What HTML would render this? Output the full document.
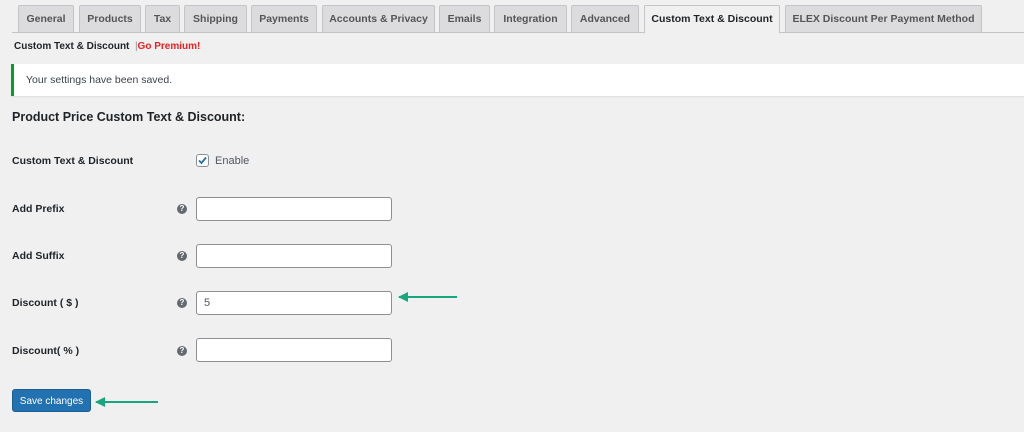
<!DOCTYPE html>
<html><head><meta charset="utf-8"><style>
*{box-sizing:border-box;margin:0;padding:0}
body{width:1024px;height:432px;background:#f0f0f1;font-family:"Liberation Sans",sans-serif;color:#23282d;position:relative;overflow:hidden;font-size:12px}
.tabline{position:absolute;left:12px;right:0;top:32px;height:1px;background:#c3c4c7}
.tab{position:absolute;top:5px;height:27px;background:#dcdcde;border:1px solid #c3c4c7;border-bottom:none;border-radius:2px 2px 0 0;font-size:10.5px;font-weight:bold;color:#555;text-align:center;line-height:26px;white-space:nowrap}
.tab.act{background:#f0f0f1;color:#1d2327;height:28px}
.abs{position:absolute;white-space:nowrap}
.notice{position:absolute;left:11px;right:0;top:64px;height:32px;background:#fff;border-left:3px solid #00a32a;box-shadow:0 1px 1px rgba(0,0,0,.08);font-size:10.5px;line-height:32px;padding-left:12px;color:#3c434a}
.lbl{position:absolute;left:12px;font-size:10.5px;font-weight:bold;color:#1d2327}
.inp{position:absolute;left:196px;width:196px;height:24px;background:#fff;border:1px solid #8c8f94;border-radius:3px;font-size:11px;padding-left:7px;line-height:22px;color:#50575e}
.help{position:absolute;left:177px;width:10px;height:10px;border-radius:50%;background:#646970;color:#fff;font-size:8px;font-weight:bold;text-align:center;line-height:10px}
</style></head><body>
<div class="tabline"></div>
<div class="tab" style="left:18px;width:56px">General</div>
<div class="tab" style="left:79px;width:62px">Products</div>
<div class="tab" style="left:145px;width:35px">Tax</div>
<div class="tab" style="left:184px;width:63px">Shipping</div>
<div class="tab" style="left:251px;width:66px">Payments</div>
<div class="tab" style="left:322px;width:113px">Accounts &amp; Privacy</div>
<div class="tab" style="left:439px;width:51px">Emails</div>
<div class="tab" style="left:494px;width:73px">Integration</div>
<div class="tab" style="left:571px;width:68px">Advanced</div>
<div class="tab act" style="left:644px;width:136px;color:#1d2327">Custom Text &amp; Discount</div>
<div class="tab" style="left:785px;width:197px">ELEX Discount Per Payment Method</div>
<div class="abs" style="left:14px;top:41px;font-size:10px;font-weight:bold;color:#1d2327">Custom Text &amp; Discount &nbsp;<span style="color:#8c8f94;font-weight:normal">|</span><span style="color:#f02020">Go Premium!</span></div>
<div class="notice">Your settings have been saved.</div>
<div class="abs" style="left:12px;top:110px;font-size:12.5px;font-weight:bold;color:#1d2327">Product Price Custom Text &amp; Discount:</div>
<div class="lbl" style="top:155px">Custom Text &amp; Discount</div>
<div class="abs" style="left:196px;top:154px;width:13px;height:13px;background:#fff;border:1px solid #8c8f94;border-radius:3px"><svg width="11" height="11" viewBox="0 0 11 11" style="position:absolute;left:0;top:0"><path d="M2 5.5 L4.5 8 L9 2.5" stroke="#2271b1" stroke-width="1.8" fill="none"/></svg></div>
<div class="abs" style="left:215px;top:155px;font-size:11px;color:#50575e">Enable</div>
<div class="lbl" style="top:203px">Add Prefix</div><div class="help" style="top:204px">?</div><div class="inp" style="top:197px"></div>
<div class="lbl" style="top:250px">Add Suffix</div><div class="help" style="top:251px">?</div><div class="inp" style="top:244px"></div>
<div class="lbl" style="top:297px">Discount ( $ )</div><div class="help" style="top:298px">?</div><div class="inp" style="top:291px">5</div>
<div class="lbl" style="top:345px">Discount( % )</div><div class="help" style="top:346px">?</div><div class="inp" style="top:338px"></div>
<div class="abs" style="left:12px;top:389px;width:79px;height:23px;background:#2271b1;border:1px solid #1b5e94;border-radius:3px;color:#fff;font-size:10px;text-align:center;line-height:23px">Save changes</div>
<svg class="abs" style="left:395px;top:290px" width="65" height="14"><path d="M4 7 H62" stroke="#17a77e" stroke-width="2"/><path d="M3 7 L13 2 L13 12 Z" fill="#17a77e"/></svg>
<svg class="abs" style="left:92px;top:395px" width="68" height="14"><path d="M4 7 H66" stroke="#17a77e" stroke-width="2"/><path d="M3 7 L13 2 L13 12 Z" fill="#17a77e"/></svg>
</body></html>
